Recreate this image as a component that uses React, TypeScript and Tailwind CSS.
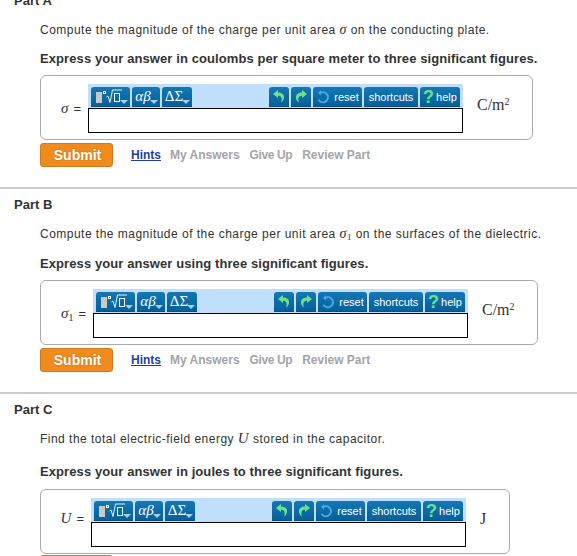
import type { ReactNode } from "react";

const sans = "font-['Liberation_Sans',Arial,sans-serif]";
const serif = "font-['Liberation_Serif','Times_New_Roman',serif]";

function ToolButton({ className, children }: { className: string; children: ReactNode }) {
  return (
    <div
      className={`relative flex h-5 items-center justify-center rounded-t-[3px] border-b border-[#0a4f7d] bg-gradient-to-b from-[#1478b4] to-[#05609a] text-white ${className}`}
    >
      {children}
    </div>
  );
}

function Caret() {
  return <span className="absolute right-[2px] bottom-[2px] h-0 w-0 border-x-[4px] border-t-[4px] border-x-transparent border-t-[#a9cfe8]" />;
}

function Undo({ flip }: { flip?: boolean }) {
  return (
    <svg width="14" height="15" viewBox="0 0 14 15" className={flip ? "-scale-x-100" : ""}>
      <path d="M1 5 L6 1 V3.5 C10.5 3.5 12.5 6 12 9 C11.7 11 10.5 12.5 9 13.5 C9.8 11.5 10 9.5 9 8 C8.3 7 7 6.6 6 6.7 V9 Z" fill="#6fe08a" />
    </svg>
  );
}

function Toolbar() {
  return (
    <div className="flex h-6 items-end justify-between bg-[#bfdffb] pr-[3px] pb-px pl-[3px]">
      <div className="flex gap-[2px]">
        <ToolButton className="w-[39px] justify-start pl-[5px]">
          <span className="mt-px h-[11px] w-[6px] bg-[#c8c8c8]" />
          <span className="mb-[8px] ml-px h-[3px] w-[3px] border border-white" />
          <svg width="17" height="15" viewBox="0 0 17 15">
            <path d="M0.5 8 L2 7 L4 13.5 L6.5 1 H16" fill="none" stroke="#e6f2fb" strokeWidth="1" />
            <rect x="8.5" y="4.5" width="5" height="8" fill="none" stroke="#fff" strokeWidth="1" />
          </svg>
          <Caret />
        </ToolButton>
        <ToolButton className={`w-7 pr-[6px] text-[15px] italic ${serif}`}>
          αβ
          <Caret />
        </ToolButton>
        <ToolButton className={`w-[30px] pr-[6px] text-[15px] ${serif}`}>
          ΔΣ
          <Caret />
        </ToolButton>
      </div>
      <div className="flex gap-[2px]">
        <ToolButton className="w-5">
          <Undo />
        </ToolButton>
        <ToolButton className="w-5">
          <Undo flip />
        </ToolButton>
        <ToolButton className={`w-[49px] gap-[5px] pt-px text-[11px] ${sans}`}>
          <svg width="13" height="14" viewBox="0 0 13 14">
            <path d="M7 2.5 A5 5 0 1 1 2 7.5" fill="none" stroke="#4aa8e6" strokeWidth="2" transform="rotate(-30 6.5 7.5)" />
            <path d="M5 0 V5.5 L2 3 Z" fill="#4aa8e6" />
          </svg>
          reset
        </ToolButton>
        <ToolButton className={`w-[54px] pt-px text-[11px] ${sans}`}>shortcuts</ToolButton>
        <ToolButton className={`w-10 gap-[2px] pt-px text-[11px] ${sans}`}>
          <span className="text-[18px] leading-none font-bold text-[#6fe08a]">?</span>
          help
        </ToolButton>
      </div>
    </div>
  );
}

function AnswerBox({
  label,
  unit,
  gutter,
  width,
  labelClass,
  unitClass,
}: {
  label: ReactNode;
  unit: ReactNode;
  gutter: string;
  width: string;
  labelClass: string;
  unitClass: string;
}) {
  return (
    <div className={`flex h-[65px] items-start rounded-md border border-[#aaaaaa] pt-2 ${width}`}>
      <div className={`flex shrink-0 items-center justify-end pr-[7px] text-[14px] text-[#333] ${serif} ${gutter} ${labelClass}`}>
        {label}
      </div>
      <div className="w-[375px] shrink-0">
        <Toolbar />
        <div className="h-[25px] border-[1.5px] border-black bg-white" />
      </div>
      <div className={`flex h-[41px] items-center text-[16px] text-[#333] ${serif} ${unitClass}`}>{unit}</div>
    </div>
  );
}

function SubmitRow() {
  return (
    <div className={`mt-[3px] flex h-6 items-center text-[12px] font-bold ${sans}`}>
      <div className="flex h-6 w-[73px] items-center justify-center rounded-[3px] border border-[#cf7a1e] bg-[#f08c1e] pl-[2px] text-[14px] text-white [text-shadow:0_0_2px_#b86a14]">
        Submit
      </div>
      <span className="ml-[18px] text-[#1f3f9e] underline">Hints</span>
      <span className="ml-[9px] text-[#a4a4a8]">My Answers</span>
      <span className="ml-[10px] tracking-[-0.4px] text-[#a4a4a8]">Give Up</span>
      <span className="ml-[10px] text-[#a4a4a8]">Review Part</span>
    </div>
  );
}

function Eq({ sym, sub }: { sym: string; sub?: string }) {
  return (
    <span className="whitespace-nowrap">
      <i className="text-[15px]">{sym}</i>
      {sub && <sub className="text-[10px]">{sub}</sub>}
      <span className={`ml-[5px] text-[13px] ${sans}`}>=</span>
    </span>
  );
}

function M2() {
  return (
    <span>
      C/m<sup className="text-[10px]">2</sup>
    </span>
  );
}

export default function App() {
  return (
    <div className={`h-[556px] w-[577px] overflow-hidden bg-white text-[#333] ${sans}`}>
      <div className="-mt-[7px]">
        <h2 className="pl-[14px] text-[13px] leading-[15px] font-bold text-[#333]">Part A</h2>
        <div className="pl-10">
          <p className="mt-[14px] text-[12px] leading-[16px] tracking-[0.48px]">
            Compute the magnitude of the charge per unit area <i className={`text-[14px] ${serif}`}>σ</i> on the conducting plate.
          </p>
          <p className="mt-[13px] text-[13px] leading-[16px] font-bold tracking-[0.09px]">
            Express your answer in coulombs per square meter to three significant figures.
          </p>
          <div className="mt-[8px]">
            <AnswerBox label={<Eq sym="σ" />} unit={<M2 />} gutter="w-[47px]" width="w-[493px]" labelClass="h-[49px]" unitClass="ml-[14px]" />
          </div>
          <SubmitRow />
        </div>

        <div className="mt-[20px] h-[2px] bg-[#cccccc]" />

        <h2 className="mt-[8px] pl-[14px] text-[13px] leading-[15px] font-bold">Part B</h2>
        <div className="pl-10">
          <p className="mt-[14px] text-[12px] leading-[16px] tracking-[0.48px]">
            Compute the magnitude of the charge per unit area <i className={`text-[14px] ${serif}`}>σ</i>
            <sub className={`text-[9px] ${serif}`}>1</sub> on the surfaces of the dielectric.
          </p>
          <p className="mt-[14px] text-[13px] leading-[16px] font-bold tracking-[0.09px]">Express your answer using three significant figures.</p>
          <div className="mt-[8px]">
            <AnswerBox label={<Eq sym="σ" sub="1" />} unit={<M2 />} gutter="w-[52px]" width="w-[498px]" labelClass="h-[49px]" unitClass="ml-[14px]" />
          </div>
          <SubmitRow />
        </div>

        <div className="mt-[20px] h-[2px] bg-[#cccccc]" />

        <h2 className="mt-[8px] pl-[14px] text-[13px] leading-[15px] font-bold">Part C</h2>
        <div className="pl-10">
          <p className="mt-[13px] text-[12px] leading-[16px] tracking-[0.48px]">
            Find the total electric-field energy <i className={`text-[15px] ${serif}`}>U</i> stored in the capacitor.
          </p>
          <p className="mt-[17px] text-[13px] leading-[16px] font-bold tracking-[0.09px]">Express your answer in joules to three significant figures.</p>
          <div className="mt-[9px]">
            <AnswerBox label={<Eq sym="U" />} unit="J" gutter="w-[50px]" width="w-[470px]" labelClass="h-[41px]" unitClass="ml-[14px]" />
          </div>
          <div className="mt-[1px] h-6 w-[73px] rounded-[3px] border border-[#cf7a1e] bg-[#f08c1e]" />
        </div>
      </div>
    </div>
  );
}
